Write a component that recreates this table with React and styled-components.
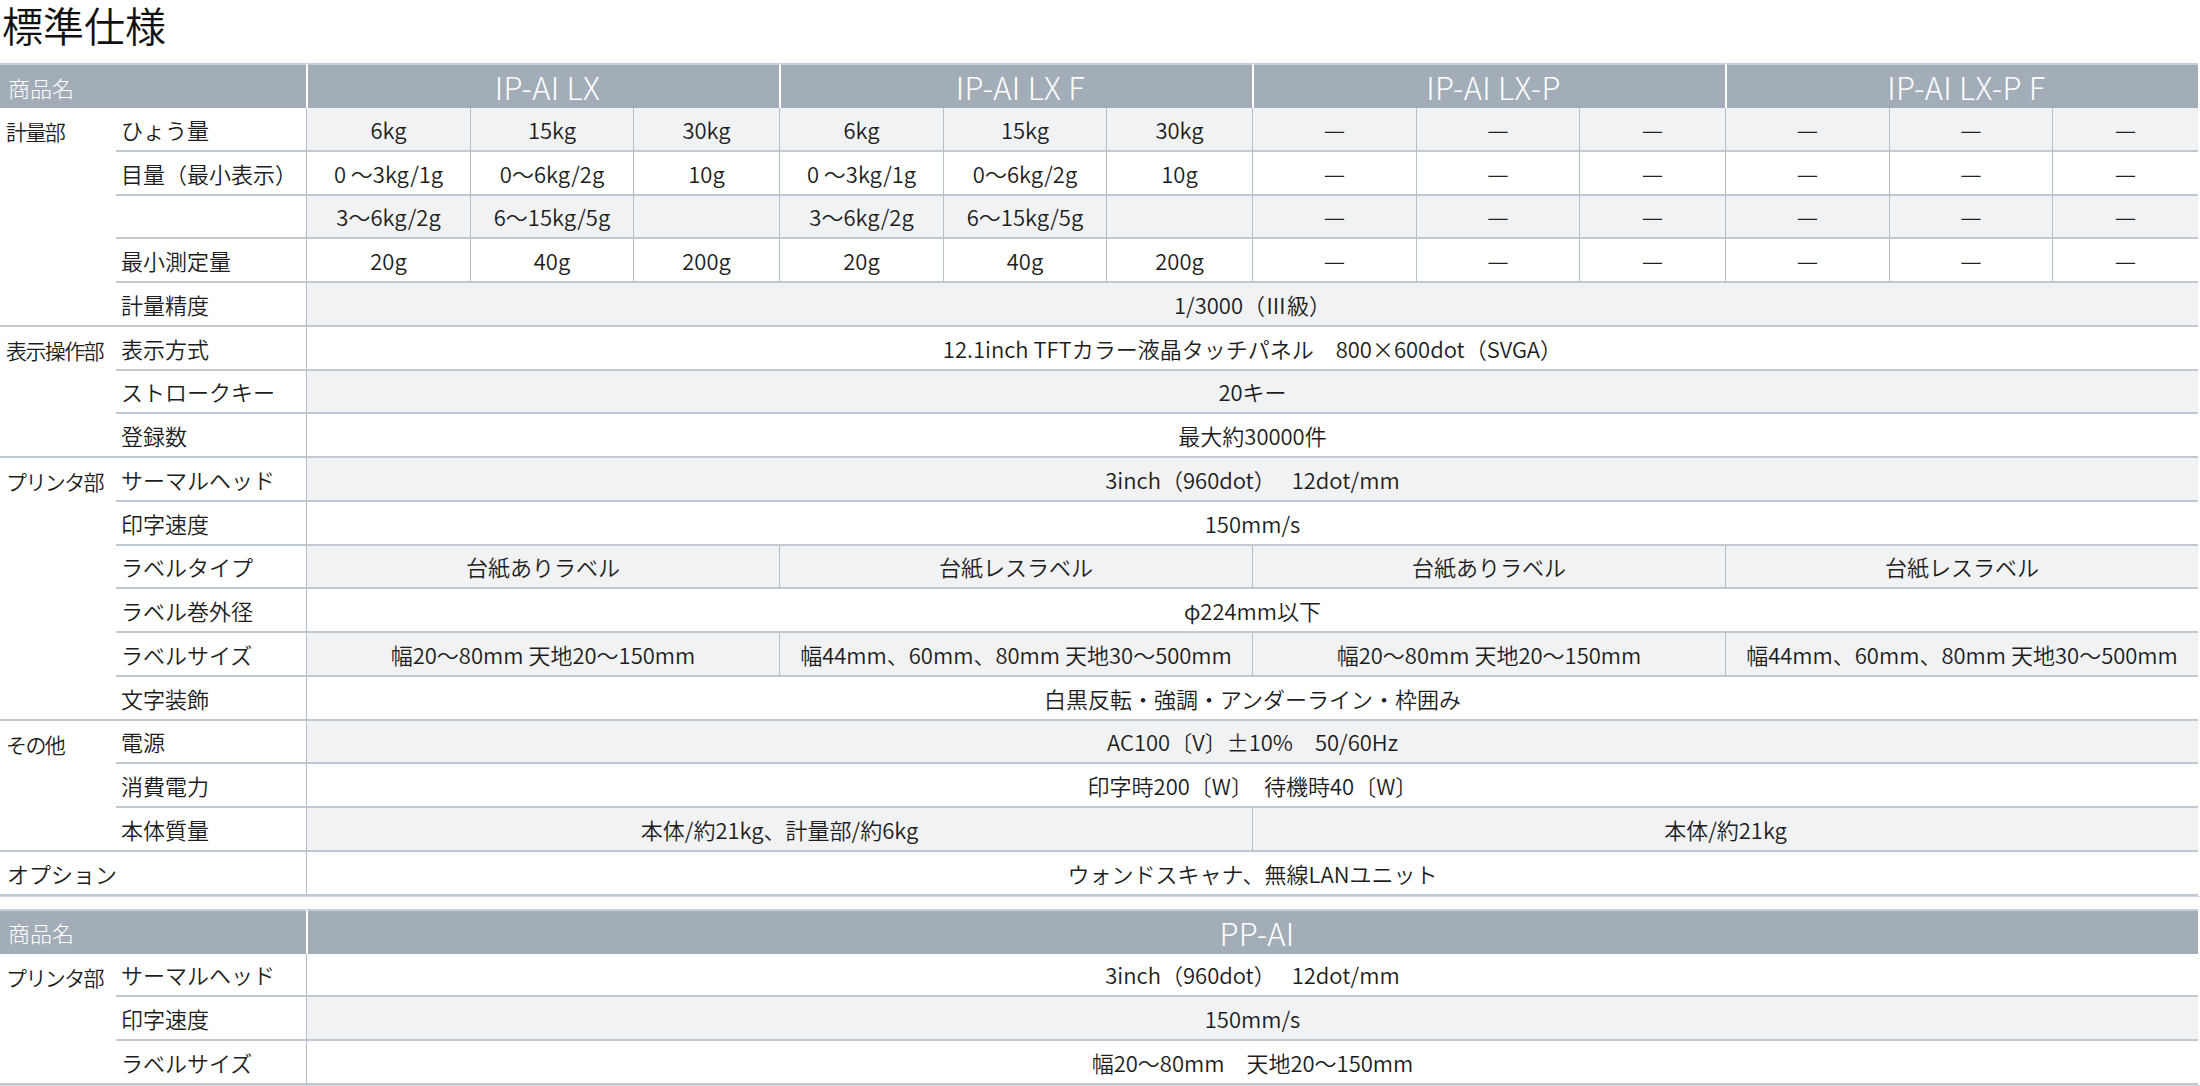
import { Fragment } from 'react'
import styled, { createGlobalStyle } from 'styled-components'

const dashes = Array(6).fill('—')

const spec = [
  { cat: '計量部', span: 5, label: 'ひょう量', cells: ['6kg', '15kg', '30kg', '6kg', '15kg', '30kg', ...dashes] },
  { label: '目量（最小表示）', cells: ['0 ～3kg/1g', '0～6kg/2g', '10g', '0 ～3kg/1g', '0～6kg/2g', '10g', ...dashes] },
  { label: '', cells: ['3～6kg/2g', '6～15kg/5g', '', '3～6kg/2g', '6～15kg/5g', '', ...dashes] },
  { label: '最小測定量', cells: ['20g', '40g', '200g', '20g', '40g', '200g', ...dashes] },
  { label: '計量精度', cells: [['1/3000（Ⅲ級）', 12]] },
  { cat: '表示操作部', span: 3, label: '表示方式', cells: [['12.1inch TFTカラー液晶タッチパネル　800×600dot（SVGA）', 12]] },
  { label: 'ストロークキー', cells: [['20キー', 12]] },
  { label: '登録数', cells: [['最大約30000件', 12]] },
  { cat: 'プリンタ部', span: 6, label: 'サーマルヘッド', cells: [['3inch（960dot）　 12dot/mm', 12]] },
  { label: '印字速度', cells: [['150mm/s', 12]] },
  {
    label: 'ラベルタイプ',
    cells: [['台紙ありラベル', 3], ['台紙レスラベル', 3], ['台紙ありラベル', 3], ['台紙レスラベル', 3]],
  },
  { label: 'ラベル巻外径', cells: [['φ224mm以下', 12]] },
  {
    label: 'ラベルサイズ',
    cells: [
      ['幅20～80mm 天地20～150mm', 3],
      ['幅44mm、60mm、80mm 天地30～500mm', 3],
      ['幅20～80mm 天地20～150mm', 3],
      ['幅44mm、60mm、80mm 天地30～500mm', 3],
    ],
  },
  { label: '文字装飾', cells: [['白黒反転・強調・アンダーライン・枠囲み', 12]] },
  { cat: 'その他', span: 3, label: '電源', cells: [['AC100〔V〕±10%　50/60Hz', 12]] },
  { label: '消費電力', cells: [['印字時200〔W〕　待機時40〔W〕', 12]] },
  { label: '本体質量', cells: [['本体/約21kg、計量部/約6kg', 6], ['本体/約21kg', 6]] },
  { wide: true, label: 'オプション', cells: [['ウォンドスキャナ、無線LANユニット', 12]] },
]

const printerSpec = [
  { cat: 'プリンタ部', span: 3, label: 'サーマルヘッド', cells: [['3inch（960dot）　 12dot/mm', 12]] },
  { label: '印字速度', cells: [['150mm/s', 12]] },
  { label: 'ラベルサイズ', cells: [['幅20～80mm　天地20～150mm', 12]] },
]

function SpecRows({ rows, shadeFirst }) {
  return rows.map((row, i) => {
    const shaded = shadeFirst ? i % 2 === 0 : i % 2 === 1
    let col = 0
    return (
      <Fragment key={i}>
        {row.cat && <CategoryCell $rows={row.span}>{row.cat}</CategoryCell>}
        {row.wide ? <WideLabel>{row.label}</WideLabel> : <LabelCell>{row.label}</LabelCell>}
        {row.cells.map((c, j) => {
          const [text, span] = Array.isArray(c) ? c : [c, 1]
          const start = col
          col += span
          return (
            <DataCell key={j} $span={span} $shade={shaded}>
              {text === '—' ? <Dash $low={start % 3 === 1}>—</Dash> : text}
            </DataCell>
          )
        })}
      </Fragment>
    )
  })
}

export default function App() {
  return (
    <Page>
      <GlobalStyle />
      <Title>標準仕様</Title>
      <SpecTable>
        <HeadLabel>商品名</HeadLabel>
        {['IP-AI LX', 'IP-AI LX F', 'IP-AI LX-P', 'IP-AI LX-P F'].map((m) => (
          <HeadModel key={m} $span={3}>{m}</HeadModel>
        ))}
        <SpecRows rows={spec} shadeFirst />
      </SpecTable>
      <SpecTable $spaced>
        <HeadLabel>商品名</HeadLabel>
        <HeadModel $span={12}>PP-AI</HeadModel>
        <SpecRows rows={printerSpec} />
      </SpecTable>
    </Page>
  )
}

const GlobalStyle = createGlobalStyle`
  html, body {
    margin: 0;
    padding: 0;
    background: #fff;
  }
  body {
    font-family: "Noto Sans CJK JP", "Noto Sans", sans-serif;
    color: #1d1d1d;
  }
`

const Page = styled.div`
  width: 2200px;
  display: flex;
  flex-direction: column;
`

const Title = styled.h1`
  margin: 0;
  padding: 2px 0 0 2px;
  height: 61px;
  font-size: 41px;
  line-height: 44px;
  font-weight: 350;
  color: #111;
`

const SpecTable = styled.div`
  display: grid;
  grid-template-columns: 116px 190px repeat(4, 164px 163px 146px);
  grid-template-rows: 45px;
  grid-auto-rows: 43.75px;
  margin-top: ${(p) => (p.$spaced ? '12px' : '0')};
  border-bottom: 1px solid #cfd5dc;
`

const HeadBase = styled.div`
  box-sizing: border-box;
  background: #a2adb8;
  border-top: 2px solid #c7ced6;
  color: #fff;
  display: flex;
  align-items: center;
  font-weight: 300;
`

const HeadLabel = styled(HeadBase)`
  grid-column: 1 / span 2;
  padding-left: 8px;
  font-size: 22px;
`

const HeadModel = styled(HeadBase)`
  grid-column: span ${(p) => p.$span};
  justify-content: center;
  border-left: 2px solid #fff;
  padding-left: 8px;
  font-size: 31px;
  letter-spacing: 0.3px;
`

const LineCell = styled.div`
  box-sizing: border-box;
  border-bottom: 2px solid #c0c8d1;
  display: flex;
  align-items: center;
  font-size: 22px;
  font-weight: 350;
  white-space: nowrap;
  background: #fff;
`

const CategoryCell = styled(LineCell)`
  grid-column: 1;
  grid-row: span ${(p) => p.$rows};
  align-items: flex-start;
  padding: 8px 0 0 6px;
  font-size: 21px;
  letter-spacing: -1.6px;
`

const LabelCell = styled(LineCell)`
  grid-column: 2;
  padding-left: 5px;
`

const WideLabel = styled(LineCell)`
  grid-column: 1 / span 2;
  padding-left: 7px;
`

const DataCell = styled(LineCell)`
  grid-column: span ${(p) => p.$span};
  justify-content: center;
  border-left: 1px solid #b3bec9;
  background: ${(p) => (p.$shade ? '#f1f2f4' : '#fff')};
`

const Dash = styled.span`
  font-size: 24px;
  line-height: 1;
  vertical-align: ${(p) => (p.$low ? '-2px' : '0')};
  color: #222;
`
